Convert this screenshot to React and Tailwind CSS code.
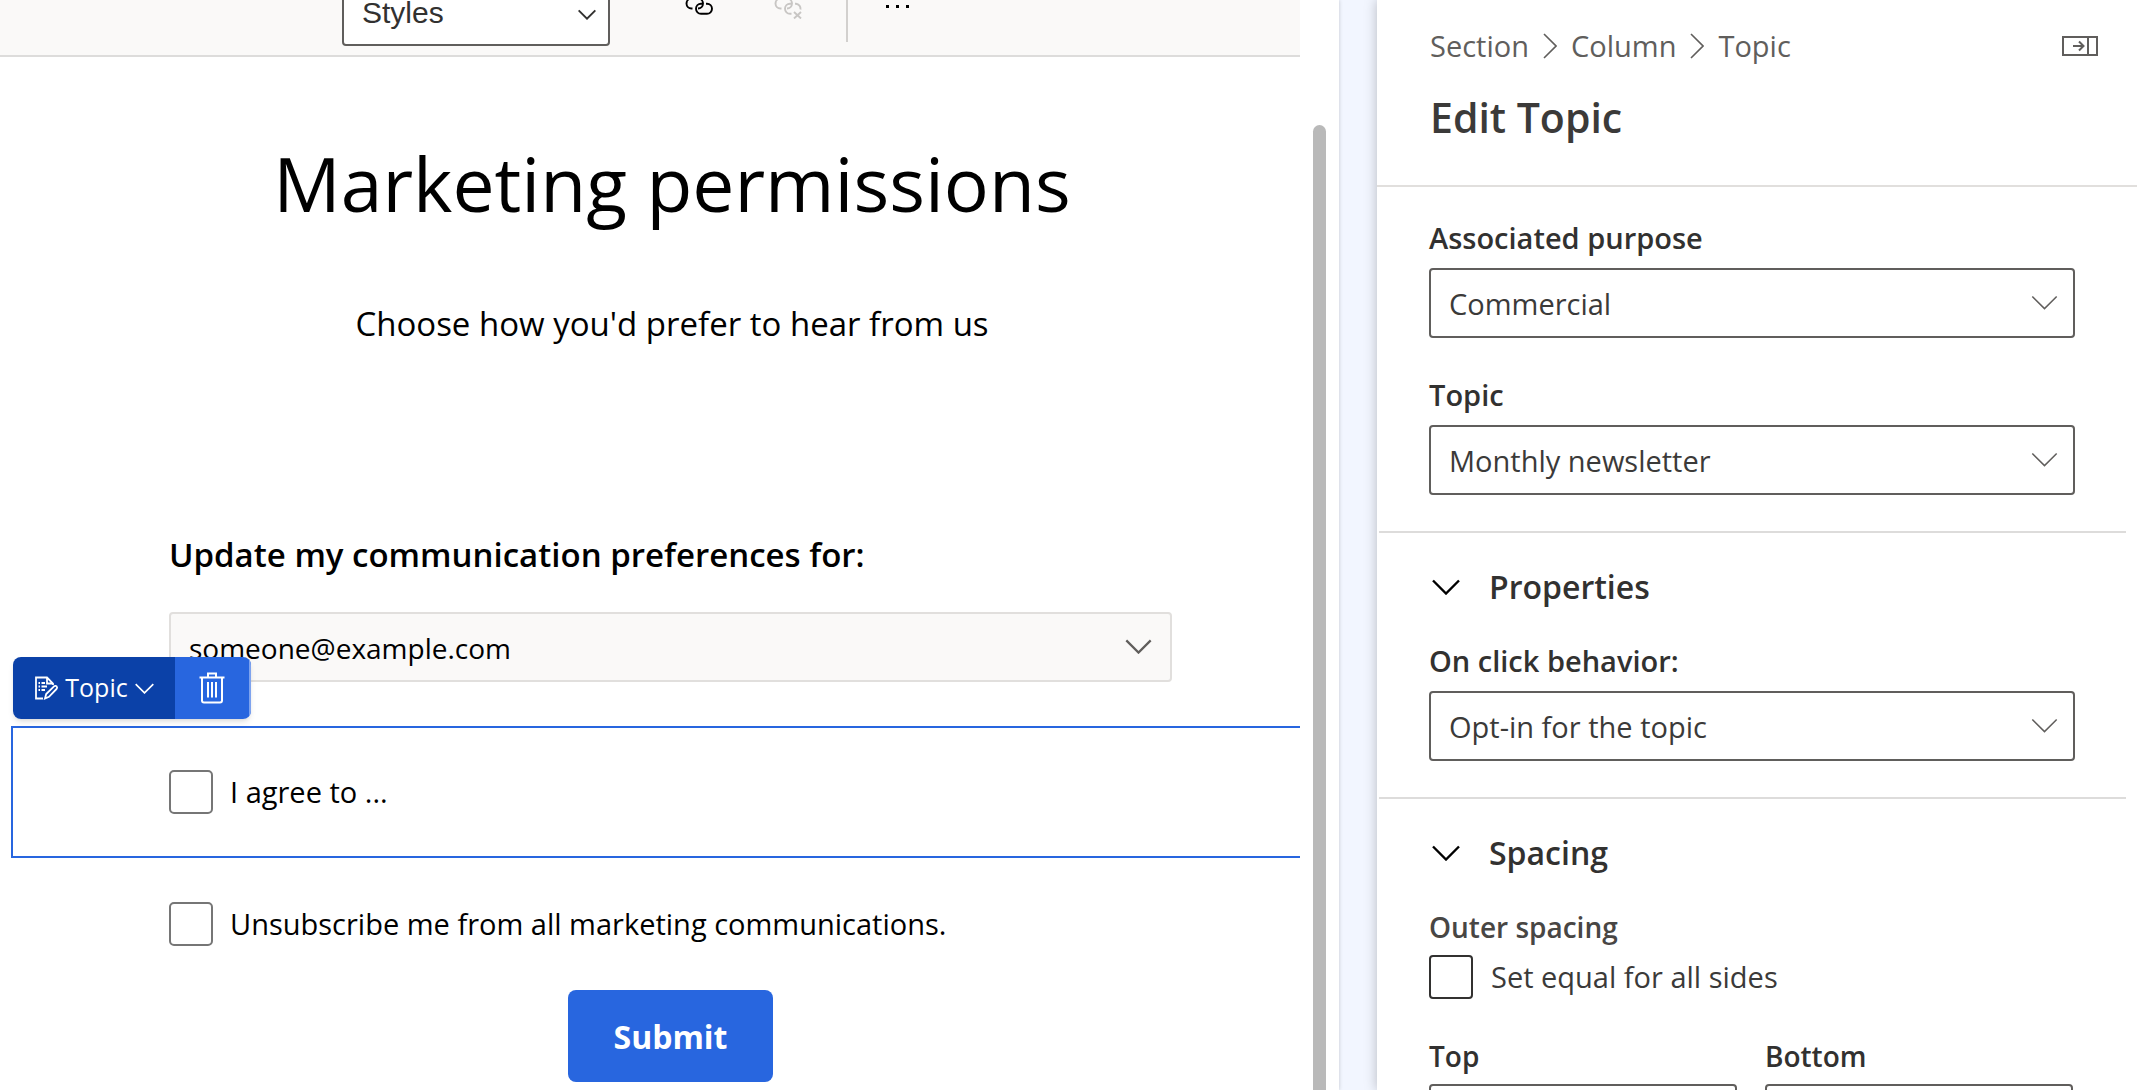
import { useState } from "react";
import clsx from "clsx";

function Chevron({ className, strokeWidth = 2 }) {
  return (
    <svg viewBox="0 0 28 16" fill="none" stroke="currentColor" strokeWidth={strokeWidth} className={className} aria-hidden="true">
      <path d="M1 1.5 L14 14.5 L27 1.5" />
    </svg>
  );
}

function CrumbArrow() {
  return (
    <svg viewBox="0 0 14 26" fill="none" stroke="currentColor" strokeWidth="1.6" className="h-[26px] w-[14px]" aria-hidden="true">
      <path d="M1 1 L13 13 L1 25" />
    </svg>
  );
}

function LinkIcon({ className, broken }) {
  return (
    <svg viewBox="0 0 30 32" fill="none" stroke="currentColor" strokeWidth="1.9" className={className} aria-hidden="true">
      <path d="M7.500 21.500 H6.500 A5 5 0 0 1 6.500 11.500 H13 A5 5 0 0 1 13 21.500" />
      {broken ? (
        <path d="M17 16.800 H16 A5 5 0 0 0 16 26.800 H17.500 M21 16.800 H22 A5 5 0 0 1 26.500 22.500" />
      ) : (
        <path d="M17 16.800 H16 A5 5 0 0 0 16 26.800 H22 A5 5 0 0 0 22 16.800 H21" />
      )}
      {broken && <path d="M20 25 L27 31.500 M27 25 L20 31.500" />}
    </svg>
  );
}

function FormIcon() {
  return (
    <svg viewBox="0 0 24 24" fill="none" stroke="currentColor" strokeWidth="1.8" className="h-6 w-6" aria-hidden="true">
      <path d="M9 22.500 H2 V1.500 H13 L19 7.500 V9 M13 1.500 V7.500 H19" />
      <path d="M4.500 7 H6 M7.500 7 H11 M4.500 10.500 H6 M7.500 10.500 H13 M4.500 14 H6 M7.500 14 H11" />
      <path d="M11 22.500 L12.200 18 L20 10.300 C21 9.500 22.800 9.800 23 11 C23.200 12 23 12.500 22.500 13 L15 20.800 Z" />
    </svg>
  );
}

function TrashIcon() {
  return (
    <svg viewBox="0 0 26 32" fill="none" stroke="currentColor" strokeWidth="2" className="h-8 w-[26px]" aria-hidden="true">
      <path d="M0.500 5.500 H25.500 M9 5 V1.500 H17 V5 M3 5.500 V28.500 Q3 30.500 5 30.500 H21 Q23 30.500 23 28.500 V5.500" />
      <path d="M9 10 V25.500 M13 10 V25.500 M17 10 V25.500" />
    </svg>
  );
}

function CollapsePaneIcon() {
  return (
    <svg viewBox="0 0 36 20" fill="none" stroke="currentColor" strokeWidth="2" className="h-5 w-9" aria-hidden="true">
      <path d="M1 1 H35 V19 H1 Z M26 1 V19" />
      <path d="M11 10 H21 M17 5.500 L21.500 10 L17 14.500" />
    </svg>
  );
}

function SelectField({ id, label, options }) {
  return (
    <div>
      <label htmlFor={id} className="block text-[29px] leading-10 font-semibold text-[#323130]">
        {label}
      </label>
      <div className="relative mt-[10px]">
        <select
          id={id}
          className="block h-[70px] w-full appearance-none rounded border-2 border-[#605e5c] bg-white px-[18px] pt-[2px] text-[29px] text-[#3b3a39]"
        >
          {options.map((option) => (
            <option key={option}>{option}</option>
          ))}
        </select>
        <Chevron strokeWidth={1.6} className="pointer-events-none absolute top-[27px] right-[17px] h-[15px] w-[27px] text-[#605e5c]" />
      </div>
    </div>
  );
}

function SectionToggle({ title, open, onToggle }) {
  return (
    <h3>
      <button
        type="button"
        aria-expanded={open}
        onClick={onToggle}
        className="flex items-center gap-7 pl-[2px] text-[32px] leading-[44px] font-semibold text-[#323130]"
      >
        <Chevron strokeWidth={2.4} className={clsx("h-4 w-[30px] text-black", !open && "-rotate-90")} />
        {title}
      </button>
    </h3>
  );
}

function CheckRow({ id, label }) {
  return (
    <div className="flex items-center gap-[17px]">
      <input id={id} type="checkbox" className="h-11 w-11 appearance-none rounded-[5px] border-2 border-[#767676] bg-white checked:bg-[#2866df]" />
      <label htmlFor={id} className="text-[29px] leading-[42px] text-black">
        {label}
      </label>
    </div>
  );
}

function Toolbar() {
  return (
    <div className="flex h-[57px] shrink-0 items-end overflow-hidden border-b-2 border-[#dddcdb] bg-[#faf9f8] pl-[342px]">
      <div className="relative mb-[9px]">
        <select
          aria-label="Styles"
          className="block h-[70px] w-[268px] appearance-none rounded border-2 border-[#605e5c] bg-white px-[18px] pt-[2px] font-['Liberation_Sans',sans-serif] text-[30px] text-[#323130]"
        >
          <option>Styles</option>
        </select>
        <Chevron strokeWidth={3} className="pointer-events-none absolute right-[14px] bottom-[26px] h-[11px] w-[18px] text-[#323130]" />
      </div>
      <button type="button" aria-label="Link" className="mb-9 ml-[75px]">
        <LinkIcon className="h-8 w-[30px] text-black" />
      </button>
      <button type="button" aria-label="Remove link" disabled className="mb-9 ml-[59px]">
        <LinkIcon broken className="h-8 w-[30px] text-[#c8c6c4]" />
      </button>
      <div className="mb-[13px] ml-[42px] h-[70px] w-[2px] bg-[#d2d0ce]" />
      <button type="button" aria-label="More" className="mb-[47px] ml-[38px] flex gap-[7px]">
        <span className="h-[3px] w-[3px] bg-black" />
        <span className="h-[3px] w-[3px] bg-black" />
        <span className="h-[3px] w-[3px] bg-black" />
      </button>
    </div>
  );
}

function Canvas() {
  return (
    <main className="flex min-w-0 flex-1 flex-col">
      <Toolbar />
      <h1 className="mt-[78px] pl-[44px] text-center text-[75px] leading-[96px] text-black">Marketing permissions</h1>
      <p className="mt-[69px] pl-[44px] text-center text-[33px] leading-[48px] text-black">
        Choose how you'd prefer to hear from us
      </p>

      <div className="mt-[183px] pr-[128px] pl-[169px]">
        <label htmlFor="email" className="block text-[33px] leading-[48px] font-semibold text-black">
          Update my communication preferences for:
        </label>
        <div className="relative mt-[33px]">
          <select
            id="email"
            className="block h-[70px] w-full appearance-none rounded border-2 border-[#e1dfdd] bg-[#faf9f8] px-[18px] pt-[2px] text-[28px] text-black"
          >
            <option>someone@example.com</option>
          </select>
          <Chevron strokeWidth={2.4} className="pointer-events-none absolute top-[27px] right-[20px] h-[15px] w-[27px] text-[#605e5c]" />
        </div>
      </div>

      {/* selected block with its floating toolbar */}
      <div className="relative mt-[44px] ml-[11px] flex h-[132px] items-center border-y-2 border-l-2 border-[#2866df] pl-[156px]">
        <div className="absolute bottom-[137px] left-0 flex h-[62px] overflow-hidden rounded-lg text-white shadow-md">
          <button type="button" className="flex w-[162px] items-center justify-center gap-[7px] bg-[#0b41a8] text-[25px]">
            <FormIcon />
            Topic
            <Chevron className="h-[11px] w-[19px]" strokeWidth={2.4} />
          </button>
          <button type="button" aria-label="Delete" className="flex w-[76px] items-center justify-center border-r-2 border-[#7ea3ee] bg-[#2866df]">
            <TrashIcon />
          </button>
        </div>
        <CheckRow id="agree" label="I agree to ..." />
      </div>

      <div className="mt-11 pl-[169px]">
        <CheckRow id="unsubscribe" label="Unsubscribe me from all marketing communications." />
      </div>

      <div className="mt-11 flex justify-center pl-[41px]">
        <button type="submit" className="h-[92px] rounded-lg bg-[#2866df] px-[46px] pt-[2px] text-[32px] font-bold text-white">
          Submit
        </button>
      </div>
    </main>
  );
}

function PropertiesPane() {
  const [open, setOpen] = useState({ properties: true, spacing: true });
  const toggle = (key) => setOpen((prev) => ({ ...prev, [key]: !prev[key] }));

  return (
    <aside className="w-[760px] shrink-0 bg-white shadow-[0_0_12px_rgba(0,0,0,0.25)]">
      <header className="border-b-2 border-[#e1dfdd] pt-[26px] pr-[39px] pb-10 pl-[53px]">
        <div className="flex items-center justify-between text-[#605e5c]">
          <nav aria-label="Breadcrumb" className="flex items-center gap-[14px] text-[29px] leading-10">
            <a href="#section">Section</a>
            <CrumbArrow />
            <a href="#column">Column</a>
            <CrumbArrow />
            <a href="#topic">Topic</a>
          </nav>
          <button type="button" aria-label="Collapse pane">
            <CollapsePaneIcon />
          </button>
        </div>
        <h2 className="mt-[23px] text-[41px] leading-[56px] font-semibold text-[#3b3a39]">Edit Topic</h2>
      </header>

      <div className="mr-[11px] ml-[2px]">
        <section className="border-b-2 border-[#dddcdb] pt-[31px] pr-[51px] pb-9 pl-[50px]">
          <SelectField id="purpose" label="Associated purpose" options={["Commercial"]} />
          <div className="mt-[37px]">
            <SelectField id="topic-name" label="Topic" options={["Monthly newsletter"]} />
          </div>
        </section>

        <section className="border-b-2 border-[#dddcdb] pt-8 pr-[51px] pb-9 pl-[50px]">
          <SectionToggle title="Properties" open={open.properties} onToggle={() => toggle("properties")} />
          {open.properties && (
            <div className="mt-8">
              <SelectField id="behavior" label="On click behavior:" options={["Opt-in for the topic"]} />
            </div>
          )}
        </section>

        <section className="pt-8 pr-[51px] pl-[50px]">
          <SectionToggle title="Spacing" open={open.spacing} onToggle={() => toggle("spacing")} />
          {open.spacing && (
            <>
              <h4 className="mt-8 text-[28px] leading-10 font-semibold text-[#484644]">Outer spacing</h4>
              <div className="mt-2 flex items-center gap-[18px]">
                <input id="equal" type="checkbox" className="h-11 w-11 appearance-none rounded border-2 border-[#323130] bg-white checked:bg-[#2866df]" />
                <label htmlFor="equal" className="text-[29px] leading-[42px] text-[#3b3a39]">
                  Set equal for all sides
                </label>
              </div>
              <div className="mt-[37px] grid grid-cols-2 gap-7 pr-[2px]">
                {["Top", "Bottom"].map((side) => (
                  <div key={side}>
                    <label htmlFor={side} className="block text-[28px] leading-10 font-semibold text-[#323130]">
                      {side}
                    </label>
                    <input id={side} type="text" className="mt-2 block h-[70px] w-full rounded border-2 border-[#605e5c] px-[18px] text-[29px]" />
                  </div>
                ))}
              </div>
            </>
          )}
        </section>
      </div>
    </aside>
  );
}

export default function App() {
  return (
    <div className="flex h-screen overflow-hidden bg-[#f2f6ff] font-['Open_Sans','Noto_Sans',sans-serif]">
      <div className="mr-[38px] flex min-w-0 flex-1 bg-white shadow-[0_0_4px_rgba(0,0,0,0.2)]">
        <Canvas />
        <div className="flex w-[39px] shrink-0 px-[13px] pt-[125px]">
          <div className="flex-1 rounded-t-full bg-[#b9b9b9]" />
        </div>
      </div>
      <PropertiesPane />
    </div>
  );
}
